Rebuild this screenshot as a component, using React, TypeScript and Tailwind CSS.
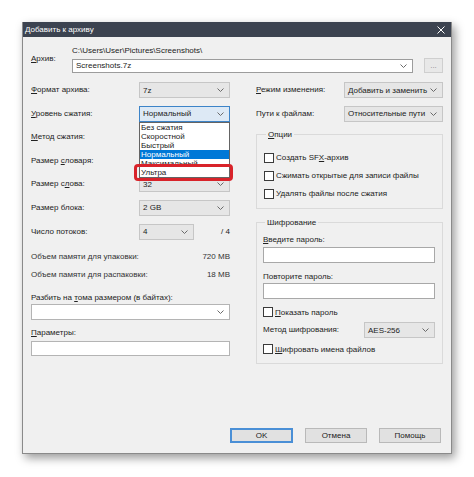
import type { ReactNode } from "react"

function Chevron() {
  return (
    <svg width="7" height="4" viewBox="0 0 7 4" className="shrink-0">
      <path d="M0.5 0.5 L3.5 3.5 L6.5 0.5" fill="none" stroke="#6a6a6a" strokeWidth="1" />
    </svg>
  )
}

type SelectProps = {
  value?: string
  className?: string
  focused?: boolean
  white?: boolean
}

function Select({ value = "", className = "", focused = false, white = false }: SelectProps) {
  const tone = focused
    ? "border-[#3d84c8] bg-[#dde9f5]"
    : white
      ? "border-[#b4b4b4] bg-white"
      : "border-[#c6c6c6] bg-[#e6e6e6]"
  return (
    <div className={`flex items-center justify-between h-[16px] pl-[3px] pr-[5px] border ${tone} ${className}`}>
      <span className="leading-[11px] whitespace-nowrap">{value}</span>
      <Chevron />
    </div>
  )
}

function Row({ label, width, children }: { label: ReactNode; width: string; children: ReactNode }) {
  return (
    <div className="flex items-center h-[16px]">
      <div className={`${width} shrink-0`}>{label}</div>
      {children}
    </div>
  )
}

function Check({ children }: { children: ReactNode }) {
  return (
    <div className="flex items-center gap-[2px] h-[10px]">
      <div className="w-[10px] h-[10px] border border-[#3a3a3a] bg-white shrink-0" />
      <span className="leading-[11px] whitespace-nowrap">{children}</span>
    </div>
  )
}

function U({ children }: { children: ReactNode }) {
  return <span className="underline underline-offset-1">{children}</span>
}

function Button({ children, primary = false }: { children: ReactNode; primary?: boolean }) {
  return (
    <div
      className={`flex items-center justify-center h-[15px] bg-[#e1e1e1] ${
        primary ? "w-[63px] border-2 border-[#4a8fd6]" : "w-[62px] border border-[#b9b9b9]"
      }`}
    >
      {children}
    </div>
  )
}

const levels = ["Без сжатия", "Скоростной", "Быстрый", "Нормальный", "Максимальный", "Ультра"]

export default function App() {
  return (
    <div className="w-[474px] h-[477px] bg-white pt-[22px] pl-[22px] font-['Liberation_Sans',Arial,sans-serif] text-[8px] text-[#222]">
      <div className="w-[430px] h-[432px] flex flex-col bg-[#f0f0f0] border border-t-0 border-[#8a8a8a] shadow-[3px_4px_9px_rgba(0,0,0,0.4)]">
        {/* Title bar */}
        <div className="h-[15px] flex items-center justify-between bg-[#3c4350] text-white pl-[2px] pr-[6px]">
          <span className="text-[8px]">Добавить к архиву</span>
          <svg width="8" height="8" viewBox="0 0 8 8">
            <path d="M0.5 0.5 L7.5 7.5 M7.5 0.5 L0.5 7.5" stroke="#fff" strokeWidth="1" />
          </svg>
        </div>

        <div className="flex-1 flex flex-col px-[8px]">
          {/* Archive path */}
          <div className="flex mt-[8px]">
            <div className="w-[41px] pt-[8px] shrink-0">
              <U>А</U>рхив:
            </div>
            <div className="flex-1 flex flex-col">
              <div className="leading-[11px] h-[11px]">C:\Users\User\Pictures\Screenshots\</div>
              <div className="flex items-end mt-[2px]">
                <div className="flex-1 flex items-center justify-between h-[14px] pl-[3px] pr-[5px] border border-[#9c9c9c] bg-white">
                  <span>Screenshots.7z</span>
                  <Chevron />
                </div>
                <div className="ml-[11px] w-[19px] h-[15px] flex items-center justify-center border border-[#cfcfcf] bg-[#e8e8e8] text-[#8a8a8a]">
                  ...
                </div>
              </div>
            </div>
          </div>

          {/* Two columns */}
          <div className="flex gap-[26px] mt-[9px]">
            {/* Left */}
            <div className="w-[199px] flex flex-col">
              <div className="flex flex-col gap-[7.6px]">
                <Row label={<><U>Ф</U>ормат архива:</>} width="w-[108px]">
                  <Select value="7z" className="flex-1" />
                </Row>
                <Row label={<><U>У</U>ровень сжатия:</>} width="w-[108px]">
                  <div className="relative flex-1">
                    <Select value="Нормальный" focused />
                    <div className="absolute left-0 top-full w-full border border-[#646464] bg-white z-10">
                      {levels.map((l) => (
                        <div
                          key={l}
                          className={`h-[9px] leading-[9px] pl-[1px] ${
                            l === "Нормальный" ? "bg-[#0078d7] text-white" : ""
                          }`}
                        >
                          {l}
                        </div>
                      ))}
                      <div className="absolute left-[-6px] top-[41px] w-[99px] h-[17px] rounded-[4px] border-[3px] border-[#d8232a]" />
                    </div>
                  </div>
                </Row>
                <Row label={<><U>М</U>етод сжатия:</>} width="w-[108px]">
                  <Select className="flex-1" />
                </Row>
                <Row label={<>Размер <U>с</U>ловаря:</>} width="w-[108px]">
                  <Select className="flex-1" />
                </Row>
                <Row label={<>Размер с<U>л</U>ова:</>} width="w-[108px]">
                  <Select value="32" className="flex-1" />
                </Row>
                <Row label="Размер блока:" width="w-[108px]">
                  <Select value="2 GB" className="flex-1" />
                </Row>
                <Row label="Число потоков:" width="w-[108px]">
                  <Select value="4" className="w-[55px]" />
                  <span className="ml-auto">/ 4</span>
                </Row>
              </div>

              <div className="flex flex-col gap-[7px] mt-[11px] text-[#333]">
                <div className="flex justify-between leading-[11px]">
                  <span>Объем памяти для упаковки:</span>
                  <span>720 MB</span>
                </div>
                <div className="flex justify-between leading-[11px]">
                  <span>Объем памяти для распаковки:</span>
                  <span>18 MB</span>
                </div>
              </div>

              <div className="leading-[11px] mt-[12px]">
                Разбить на <U>т</U>ома размером (в байтах):
              </div>
              <Select white className="mt-[1.5px] h-[15px]" />
              <div className="leading-[11px] mt-[6.5px]">
                <U>П</U>араметры:
              </div>
              <div className="mt-[3.5px] h-[15px] border border-[#b4b4b4] bg-white" />
            </div>

            {/* Right */}
            <div className="flex-1 flex flex-col">
              <div className="flex flex-col gap-[7.6px]">
                <Row label={<><U>Р</U>ежим изменения:</>} width="w-[88px]">
                  <Select value="Добавить и заменить" className="flex-1" />
                </Row>
                <Row label="Пути к файлам:" width="w-[88px]">
                  <Select value="Относительные пути" className="flex-1" />
                </Row>
              </div>

              <fieldset className="mt-[7px] border border-[#dadada] pl-[7px] pb-[9px] flex flex-col gap-[8px]">
                <legend className="px-[2px] ml-[2px] leading-[11px]">
                  <U>О</U>пции
                </legend>
                <div className="mt-[5px]" />
                <Check>Создать SF<U>X</U>-архив</Check>
                <Check>Сжимать открытые для записи файлы</Check>
                <Check>Удалять файлы после сжатия</Check>
              </fieldset>

              <fieldset className="mt-[8px] border border-[#dadada] pl-[6px] pr-[7px] pb-[9px] flex flex-col">
                <legend className="px-[2px] ml-[2px] leading-[11px]">Шифрование</legend>
                <div className="leading-[11px] mt-[6px]">
                  <U>В</U>ведите пароль:
                </div>
                <div className="mt-[2.5px] h-[16px] border border-[#a8a8a8] bg-white" />
                <div className="leading-[11px] mt-[7.5px]">Повторите пароль:</div>
                <div className="mt-[1.5px] h-[16px] border border-[#a8a8a8] bg-white" />
                <div className="mt-[8px]">
                  <Check>
                    <U>П</U>оказать пароль
                  </Check>
                </div>
                <div className="flex items-center mt-[5px]">
                  <span className="flex-1">Метод шифрования:</span>
                  <Select value="AES-256" className="w-[71px] h-[15px]" />
                </div>
                <div className="mt-[6px]">
                  <Check>
                    <U>Ш</U>ифровать имена файлов
                  </Check>
                </div>
              </fieldset>
            </div>
          </div>

          {/* Buttons */}
          <div className="mt-auto mb-[10px] flex justify-end gap-[12px] pr-[2px]">
            <Button primary>OK</Button>
            <Button>Отмена</Button>
            <Button>Помощь</Button>
          </div>
        </div>
      </div>
    </div>
  )
}
